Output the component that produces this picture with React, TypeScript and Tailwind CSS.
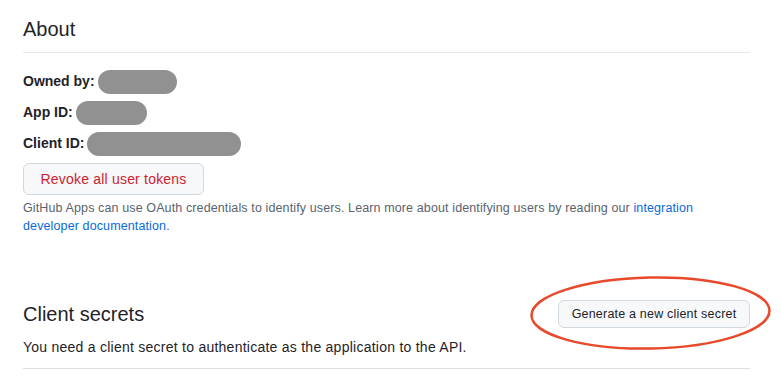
import React from "react";

function Redacted({ w }: { w: string }) {
  return <span className={`inline-block h-[24px] rounded-full bg-[#919191] ${w}`} />;
}

function InfoRow({ label, pill }: { label: string; pill: string }) {
  return (
    <div className="flex h-[31px] items-center gap-[3px]">
      <span className="font-bold text-[14px] text-[#1f2328]">{label}</span>
      <Redacted w={pill} />
    </div>
  );
}

export default function App() {
  return (
    <div
      className="relative min-h-[387px] w-[781px] bg-white"
      style={{ fontFamily: '"Liberation Sans", Arial, sans-serif' }}
    >
      <div className="ml-[23px] w-[727px] pt-[14px]">
        {/* About */}
        <h2 className="border-b border-[#e8e8e8] pb-2 text-[20px] leading-[30px] font-normal text-[#1f2328]">
          About
        </h2>

        <div className="mt-[13px]">
          <InfoRow label="Owned by:" pill="w-[79px]" />
          <InfoRow label="App ID:" pill="w-[71px]" />
          <InfoRow label="Client ID:" pill="w-[154px]" />
        </div>

        <button className="mt-[4px] flex h-[32px] w-[181px] items-center justify-center rounded-md border border-[#d1d9e0] bg-[#f6f8fa] text-[14px] tracking-[0.2px] font-medium text-[#cf222e]">
          Revoke all user tokens
        </button>

        <div className="mt-[4px] text-[12.5px] leading-[18px] tracking-[0.12px] text-[#59636e]">
          <p>
            GitHub Apps can use OAuth credentials to identify users. Learn more about identifying users by reading our{" "}
            <a className="text-[#0969da]">integration</a>
          </p>
          <p>
            <a className="text-[#0969da]">developer documentation</a>.
          </p>
        </div>

        {/* Client secrets */}
        <div className="mt-[64px] flex items-center justify-between">
          <h2 className="text-[20px] leading-[30px] font-normal text-[#1f2328]">Client secrets</h2>
          <button className="flex h-[28px] w-[192px] items-center justify-center rounded-md border border-[#d1d9e0] bg-[#f6f8fa] text-[12.5px] tracking-[0.2px] font-medium text-[#1f2328]">
            Generate a new client secret
          </button>
        </div>
        <p className="mt-[8px] border-b border-[#dfe0e5] pb-[10px] text-[14px] leading-[21px] tracking-[0.25px] text-[#1f2328]">
          You need a client secret to authenticate as the application to the API.
        </p>
      </div>

      {/* annotation */}
      <svg className="pointer-events-none absolute left-0 top-0" width="781" height="387" viewBox="0 0 781 387">
        <ellipse
          cx="650.5"
          cy="313"
          rx="119"
          ry="35.5"
          fill="none"
          stroke="#e8492b"
          strokeWidth="2.5"
          transform="rotate(-1.2 650.5 313)"
        />
      </svg>
    </div>
  );
}
